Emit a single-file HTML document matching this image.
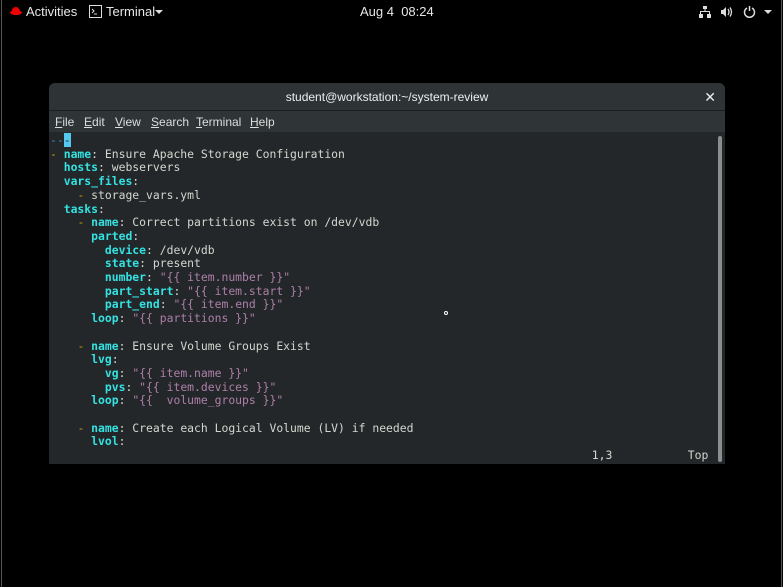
<!DOCTYPE html>
<html><head><meta charset="utf-8"><style>
*{margin:0;padding:0;box-sizing:border-box}
body{width:783px;height:587px;background:#000;position:relative;overflow:hidden;font-family:"Liberation Sans","DejaVu Sans",sans-serif}
.top{position:absolute;left:0;top:0;width:783px;height:24px;color:#e6e6e6;font-size:13px}
.top span{position:absolute;top:4px}
.edgeL{position:absolute;left:1px;top:0;width:1px;height:587px;background:#555}
.edgeR{position:absolute;left:781px;top:0;width:1px;height:587px;background:#555}
.win{position:absolute;left:49px;top:83px;width:676px;height:381px;background:#232729;border-radius:6px 6px 0 0;overflow:hidden}
.title{height:28px;background:#2e3436;color:#eee;font-size:12px;text-align:center;line-height:28px;border-bottom:1px solid #1c1f20}
.menu{height:21px;background:#2f3436;color:#ddd;font-size:12px;line-height:21px;position:relative}
.menu span{position:absolute;top:1px}
.menu u{text-decoration:underline}
.term{position:absolute;left:1px;top:51px;font-family:"DejaVu Sans Mono","Liberation Mono",monospace;font-size:11.4px;line-height:13.7px;color:#d3d7cf;white-space:pre}
.k{color:#34e2e2;font-weight:bold}
.d{color:#c4a000}
.s{color:#ad7fa8}
.b{color:#3a8fb0}
.cur{background:#55c8f0;color:#232729}
.sb{position:absolute;left:669px;top:53px;width:4px;height:326px;background:#8a8e8c;border-radius:2px}
</style></head><body>
<div class="edgeL"></div><div class="edgeR"></div>
<div class="top">
<svg style="position:absolute;left:9px;top:6px" width="14" height="10" viewBox="0 0 14 10"><path d="M3 5 Q3 1 7 1 Q10 1 11 5 L13 6 Q13 9 7 9 Q1 9 1 6 Z" fill="#e00"/></svg>
<span style="left:26px">Activities</span>
<svg style="position:absolute;left:89px;top:5px" width="13" height="13" viewBox="0 0 13 13"><rect x="0.5" y="0.5" width="12" height="12" fill="none" stroke="#ddd"/><path d="M3 4l2 2-2 2M5 9h3" stroke="#ddd" fill="none"/></svg>
<span style="left:106px">Terminal</span>
<svg style="position:absolute;left:155px;top:10px" width="8" height="5"><path d="M0 0h8L4 4z" fill="#ddd"/></svg>
<span style="left:360px">Aug 4&nbsp; 08:24</span>
<svg style="position:absolute;left:699px;top:6px" width="12" height="12" viewBox="0 0 12 12" fill="#ddd"><rect x="4" y="0" width="4" height="3"/><rect x="5.5" y="3" width="1" height="3"/><rect x="1" y="5" width="10" height="1"/><rect x="1" y="5" width="1" height="3"/><rect x="10" y="5" width="1" height="3"/><rect x="0" y="8" width="4" height="4"/><rect x="8" y="8" width="4" height="4"/></svg>
<svg style="position:absolute;left:720px;top:6px" width="14" height="12" viewBox="0 0 14 12"><path d="M1 4h2l3-3v10l-3-3H1z" fill="#ddd"/><path d="M8 3q2 3 0 6M10 1.5q3 4.5 0 9" stroke="#ddd" fill="none" stroke-width="1.3"/></svg>
<svg style="position:absolute;left:743px;top:5px" width="13" height="13" viewBox="0 0 13 13"><path d="M4 3A5 5 0 1 0 9 3" stroke="#ddd" fill="none" stroke-width="1.5"/><path d="M6.5 1v5" stroke="#ddd" stroke-width="1.5"/></svg>
<svg style="position:absolute;left:764px;top:10px" width="8" height="5"><path d="M0 0h8L4 4z" fill="#ddd"/></svg>
</div>
<div class="win">
<div class="title">student@workstation:~/system-review<span style="position:absolute;right:9px;font-size:14px">✕</span></div>
<div class="menu"><span style="left:6px"><u>F</u>ile</span><span style="left:35px"><u>E</u>dit</span><span style="left:66px"><u>V</u>iew</span><span style="left:102px"><u>S</u>earch</span><span style="left:147px"><u>T</u>erminal</span><span style="left:201px"><u>H</u>elp</span></div>
<div class="term"><span class="b">--</span><span class="cur">-</span>
<span class="d">-</span> <span class="k">name</span>: Ensure Apache Storage Configuration
  <span class="k">hosts</span>: webservers
  <span class="k">vars_files</span>:
    <span class="d">-</span> storage_vars.yml
  <span class="k">tasks</span>:
    <span class="d">-</span> <span class="k">name</span>: Correct partitions exist on /dev/vdb
      <span class="k">parted</span>:
        <span class="k">device</span>: /dev/vdb
        <span class="k">state</span>: present
        <span class="k">number</span>: <span class="s">"{{ item.number }}"</span>
        <span class="k">part_start</span>: <span class="s">"{{ item.start }}"</span>
        <span class="k">part_end</span>: <span class="s">"{{ item.end }}"</span>
      <span class="k">loop</span>: <span class="s">"{{ partitions }}"</span>

    <span class="d">-</span> <span class="k">name</span>: Ensure Volume Groups Exist
      <span class="k">lvg</span>:
        <span class="k">vg</span>: <span class="s">"{{ item.name }}"</span>
        <span class="k">pvs</span>: <span class="s">"{{ item.devices }}"</span>
      <span class="k">loop</span>: <span class="s">"{{  volume_groups }}"</span>

    <span class="d">-</span> <span class="k">name</span>: Create each Logical Volume (LV) if needed
      <span class="k">lvol</span>:
                                                                               1,3           Top</div>
<div class="sb"></div>
</div>
<div style="position:absolute;left:444px;top:311px;width:4px;height:4px;border:1px solid #fff;border-radius:50%"></div>
</body></html>
